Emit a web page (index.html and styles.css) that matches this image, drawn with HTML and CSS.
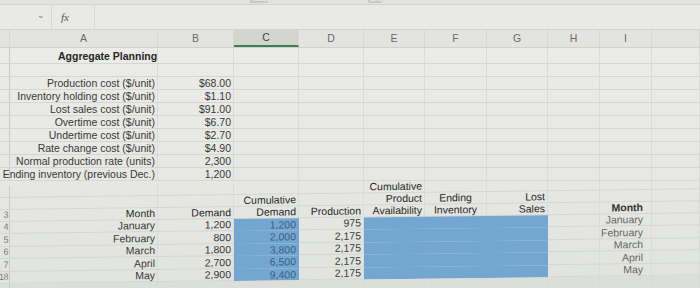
FILE: index.html
```html
<!DOCTYPE html>
<html>
<head>
<meta charset="utf-8">
<link rel="stylesheet" href="styles.css">
</head>
<body>
<div class="screen">
  <div class="ribbon">
    <span class="rb rb1">Alignment</span>
    <span class="rb rb2">Number</span>
  </div>
  <div class="fbar">
    <div class="namebox"><span class="chev">&#8964;</span></div>
    <div class="fx">fx</div>
    <div class="finput"></div>
  </div>
  <div class="sheet">
    <div class="row hdr">
      <span class="c rh"></span><span class="c">A</span><span class="c">B</span><span class="c sel">C</span><span class="c">D</span><span class="c">E</span><span class="c">F</span><span class="c">G</span><span class="c">H</span><span class="c">I</span><span class="c"></span>
    </div>
    <div class="row r16">
      <span class="c rh"></span><span class="c title">Aggregate Planning</span><span class="c"></span><span class="c"></span><span class="c"></span><span class="c"></span><span class="c"></span><span class="c"></span><span class="c"></span><span class="c"></span><span class="c"></span>
    </div>
    <div class="row r13">
      <span class="c rh"></span><span class="c"></span><span class="c"></span><span class="c"></span><span class="c"></span><span class="c"></span><span class="c"></span><span class="c"></span><span class="c"></span><span class="c"></span><span class="c"></span>
    </div>
    <div class="row r13"><span class="c rh"></span><span class="c lbl">Production cost ($/unit)</span><span class="c num">$68.00</span><span class="c"></span><span class="c"></span><span class="c"></span><span class="c"></span><span class="c"></span><span class="c"></span><span class="c"></span><span class="c"></span></div>
    <div class="row r13"><span class="c rh"></span><span class="c lbl">Inventory holding cost ($/unit)</span><span class="c num">$1.10</span><span class="c"></span><span class="c"></span><span class="c"></span><span class="c"></span><span class="c"></span><span class="c"></span><span class="c"></span><span class="c"></span></div>
    <div class="row r13"><span class="c rh"></span><span class="c lbl">Lost sales cost ($/unit)</span><span class="c num">$91.00</span><span class="c"></span><span class="c"></span><span class="c"></span><span class="c"></span><span class="c"></span><span class="c"></span><span class="c"></span><span class="c"></span></div>
    <div class="row r13"><span class="c rh"></span><span class="c lbl">Overtime cost ($/unit)</span><span class="c num">$6.70</span><span class="c"></span><span class="c"></span><span class="c"></span><span class="c"></span><span class="c"></span><span class="c"></span><span class="c"></span><span class="c"></span></div>
    <div class="row r13"><span class="c rh"></span><span class="c lbl">Undertime cost ($/unit)</span><span class="c num">$2.70</span><span class="c"></span><span class="c"></span><span class="c"></span><span class="c"></span><span class="c"></span><span class="c"></span><span class="c"></span><span class="c"></span></div>
    <div class="row r13"><span class="c rh"></span><span class="c lbl">Rate change cost ($/unit)</span><span class="c num">$4.90</span><span class="c"></span><span class="c"></span><span class="c"></span><span class="c"></span><span class="c"></span><span class="c"></span><span class="c"></span><span class="c"></span></div>
    <div class="row r13"><span class="c rh"></span><span class="c lbl">Normal production rate (units)</span><span class="c num">2,300</span><span class="c"></span><span class="c"></span><span class="c"></span><span class="c"></span><span class="c"></span><span class="c"></span><span class="c"></span><span class="c"></span></div>
    <div class="row r13"><span class="c rh"></span><span class="c lbl">Ending inventory (previous Dec.)</span><span class="c num">1,200</span><span class="c"></span><span class="c"></span><span class="c"></span><span class="c"></span><span class="c"></span><span class="c"></span><span class="c"></span><span class="c"></span></div>
    <div class="lower">
      <div class="row r12"><span class="c rh"></span><span class="c"></span><span class="c"></span><span class="c"></span><span class="c"></span><span class="c num h">Cumulative</span><span class="c"></span><span class="c"></span><span class="c"></span><span class="c"></span><span class="c"></span></div>
      <div class="row r12"><span class="c rh"></span><span class="c"></span><span class="c"></span><span class="c num h">Cumulative</span><span class="c"></span><span class="c num h">Product</span><span class="c ctr h">Ending</span><span class="c num h">Lost</span><span class="c"></span><span class="c"></span><span class="c"></span></div>
      <div class="row r12"><span class="c rh">3</span><span class="c num h">Month</span><span class="c num h">Demand</span><span class="c num h">Demand</span><span class="c num h">Production</span><span class="c num h">Availability</span><span class="c ctr h">Inventory</span><span class="c num h">Sales</span><span class="c"></span><span class="c num mh">Month</span><span class="c"></span></div>
      <div class="row r12"><span class="c rh">4</span><span class="c num">January</span><span class="c num">1,200</span><span class="c num blue">1,200</span><span class="c num">975</span><span class="c blue"></span><span class="c blue"></span><span class="c blue"></span><span class="c"></span><span class="c num mr">January</span><span class="c"></span></div>
      <div class="row r13"><span class="c rh">5</span><span class="c num">February</span><span class="c num">800</span><span class="c num blue">2,000</span><span class="c num">2,175</span><span class="c blue"></span><span class="c blue"></span><span class="c blue"></span><span class="c"></span><span class="c num mr">February</span><span class="c"></span></div>
      <div class="row r12"><span class="c rh">6</span><span class="c num">March</span><span class="c num">1,800</span><span class="c num blue">3,800</span><span class="c num">2,175</span><span class="c blue"></span><span class="c blue"></span><span class="c blue"></span><span class="c"></span><span class="c num mr">March</span><span class="c"></span></div>
      <div class="row r13"><span class="c rh">7</span><span class="c num">April</span><span class="c num">2,700</span><span class="c num blue">6,500</span><span class="c num">2,175</span><span class="c blue"></span><span class="c blue"></span><span class="c blue"></span><span class="c"></span><span class="c num mr">April</span><span class="c"></span></div>
      <div class="row r12"><span class="c rh">18</span><span class="c num">May</span><span class="c num">2,900</span><span class="c num blue">9,400</span><span class="c num">2,175</span><span class="c blue"></span><span class="c blue"></span><span class="c blue"></span><span class="c"></span><span class="c num mr">May</span><span class="c"></span></div>
      <div class="row r13 last"><span class="c rh"></span><span class="c"></span><span class="c"></span><span class="c"></span><span class="c"></span><span class="c"></span><span class="c"></span><span class="c"></span><span class="c"></span><span class="c"></span><span class="c"></span></div>
    </div>
  </div>
</div>
</body>
</html>
```
FILE: styles.css
```css
* { box-sizing: border-box; }
html, body { margin: 0; padding: 0; }
body {
  width: 700px;
  height: 288px;
  overflow: hidden;
  background: #e6e7e3;
  font-family: "Liberation Sans", Arial, sans-serif;
}
.screen {
  width: 700px;
  height: 288px;
  background: linear-gradient(180deg, #ecece8 0%, #e8e9e5 50%, #e1e3df 100%);
  overflow: hidden;
}
.ribbon {
  height: 5px;
  background: #e2e2de;
  border-bottom: 1px solid #d2d3cf;
  display: flex;
  align-items: flex-start;
  overflow: hidden;
}
.rb {
  font-size: 4px;
  line-height: 4px;
  color: #aaa;
}
.rb1 { margin-left: 250px; }
.rb2 { margin-left: 100px; }
.fbar {
  height: 25px;
  display: flex;
  border-bottom: 1px solid #d3d4cf;
  background: #e9e9e5;
}
.namebox {
  width: 52px;
  border-right: 1px solid #d6d6d2;
  display: flex;
  justify-content: flex-end;
  align-items: center;
  padding-right: 6px;
}
.chev {
  font-size: 9px;
  color: #777;
  line-height: 1;
  margin-top: -4px;
}
.fx {
  width: 43px;
  border-right: 1px solid #d8d8d4;
  font-family: "Liberation Serif", serif;
  font-style: italic;
  font-size: 11px;
  color: #555;
  padding-left: 9px;
  line-height: 24px;
}
.finput { flex: 1; }
.sheet { display: flex; flex-direction: column; }
.lower {
  display: flex;
  flex-direction: column;
  transform: skewY(-0.7deg);
  transform-origin: 400px 0;
}
.row {
  display: grid;
  grid-template-columns: 10px 148px 76px 65px 65px 61px 62px 61px 52px 52px 1fr;
  border-bottom: 1px solid #d4d7d1;
  font-size: 10.5px;
  color: #383838;
}
.row.hdr {
  height: 18px;
  background: #e3e4e0;
  color: #6a6a6a;
  font-size: 10.5px;
  border-bottom: 1px solid #cfd1cc;
}
.hdr .c {
  justify-content: center;
  align-items: center;
  border-right: 1px solid #d6d8d3;
}
.hdr .c.sel {
  background: #d3d6d0;
  color: #2f4f38;
  border-bottom: 2px solid #3f7d52;
}
.r16 { height: 16px; }
.r13 { height: 13px; }
.r12 { height: 12px; }
.c {
  display: flex;
  align-items: center;
  white-space: nowrap;
  border-right: 1px solid #d9dbd6;
  line-height: 1;
  min-width: 0;
}
.rh {
  justify-content: flex-end;
  color: #7a7a7a;
  font-size: 9px;
  letter-spacing: -0.5px;
  border-right: 1px solid #c9cbc6;
  padding-right: 1px;
}
.title {
  font-weight: bold;
  font-size: 10.5px;
  color: #262626;
  padding-left: 48px;
  padding-top: 2px;
}
.lbl, .num {
  justify-content: flex-end;
  padding-right: 2px;
}
.h { color: #262626; }
.ctr { justify-content: center; }
.blue {
  background: #74a6d2;
  color: #3c5f83;
  border-right-color: #74a6d2;
  margin-bottom: -1px;
}
.mh { color: #333; padding-right: 8px; font-weight: bold; }
.mr { color: #666; padding-right: 8px; }
.last { border-bottom: none; background: #dcdeda; }
```
